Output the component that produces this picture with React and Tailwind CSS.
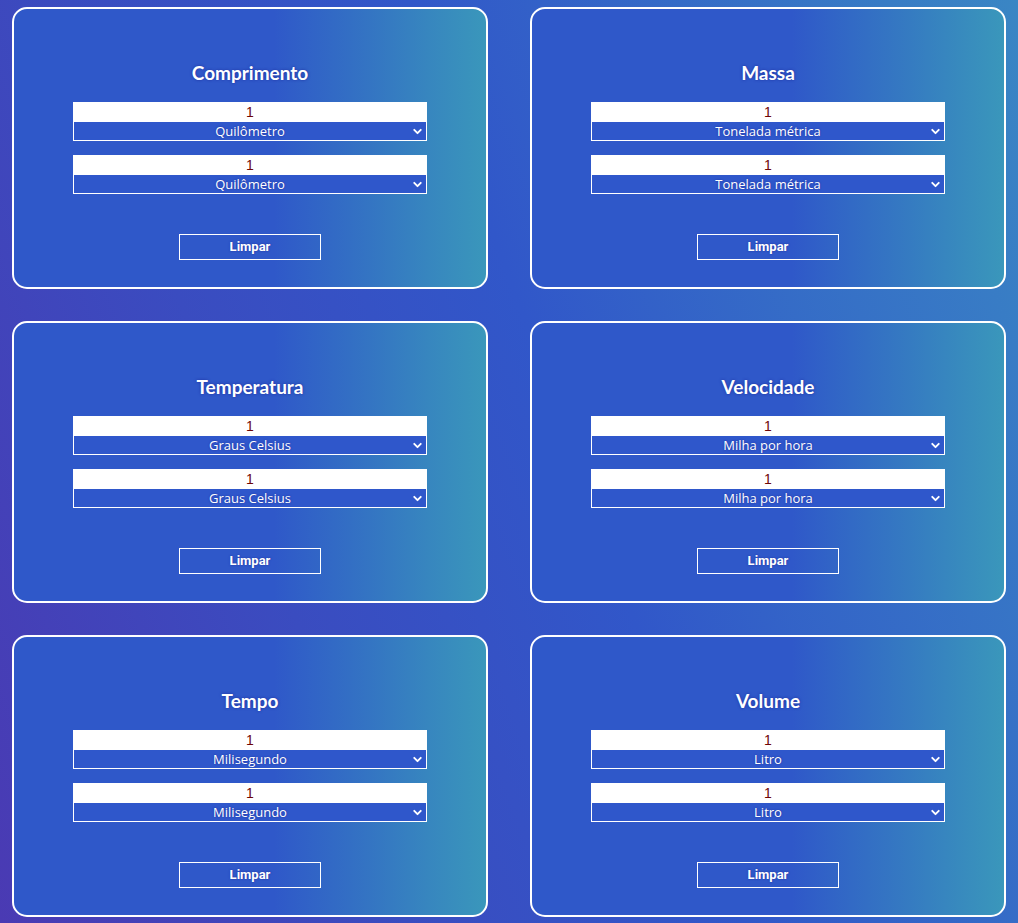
import { ChevronDown } from 'lucide-react'

const conversores = [
  { titulo: 'Comprimento', unidade: 'Quilômetro' },
  { titulo: 'Massa', unidade: 'Tonelada métrica' },
  { titulo: 'Temperatura', unidade: 'Graus Celsius' },
  { titulo: 'Velocidade', unidade: 'Milha por hora' },
  { titulo: 'Tempo', unidade: 'Milisegundo' },
  { titulo: 'Volume', unidade: 'Litro' },
]

function CampoUnidade({ unidade }) {
  return (
    <div className="flex flex-col">
      <input
        type="text"
        defaultValue="1"
        className="h-[20px] w-full bg-white text-center text-[14px] text-[#6e0606] outline-none font-['Liberation_Sans',Arial,sans-serif]"
      />
      <div className="relative h-[19px] border border-t-0 border-white bg-[#2f57cb]">
        <select
          defaultValue={unidade}
          className="block h-[18px] w-full appearance-none bg-transparent py-0 text-center text-[13px] leading-[18px] text-white outline-none font-['Open_Sans','Noto_Sans',sans-serif] [text-shadow:0_0_2px_#1d2f9e]"
        >
          <option>{unidade}</option>
        </select>
        <ChevronDown
          size={13}
          strokeWidth={3.5}
          className="pointer-events-none absolute right-[2px] top-[3px] text-white"
        />
      </div>
    </div>
  )
}

function CardConversor({ titulo, unidade }) {
  return (
    <div className="flex h-[282px] flex-col items-center rounded-[15px] border-2 border-white bg-[linear-gradient(90deg,#2f58c9_0%,#2f58c9_55%,#3a97bb_100%)] pt-[50px]">
      <h2 className="h-[28px] text-[19px] font-bold leading-[28px] text-white font-['Lato','Noto_Sans',sans-serif] [text-shadow:0_0_3px_#1d2f9e]">
        {titulo}
      </h2>
      <div className="mt-[15px] flex w-[75%] flex-col gap-[14px]">
        <CampoUnidade unidade={unidade} />
        <CampoUnidade unidade={unidade} />
      </div>
      <button className="mt-[40px] h-[26px] w-[142px] border border-white text-[13px] font-bold text-white font-['Roboto',sans-serif] [text-shadow:0_0_2px_#1d2f9e]">
        Limpar
      </button>
    </div>
  )
}

export default function App() {
  return (
    <div className="min-h-[923px] bg-[linear-gradient(70deg,#4a3ab3_0%,#3a4cc0_30%,#3157c9_55%,#3a86c4_100%)] px-[12px] pt-[7px] pb-[6px]">
      <div className="grid grid-cols-2 gap-x-[42px] gap-y-[32px]">
        {conversores.map((c) => (
          <CardConversor key={c.titulo} titulo={c.titulo} unidade={c.unidade} />
        ))}
      </div>
    </div>
  )
}
